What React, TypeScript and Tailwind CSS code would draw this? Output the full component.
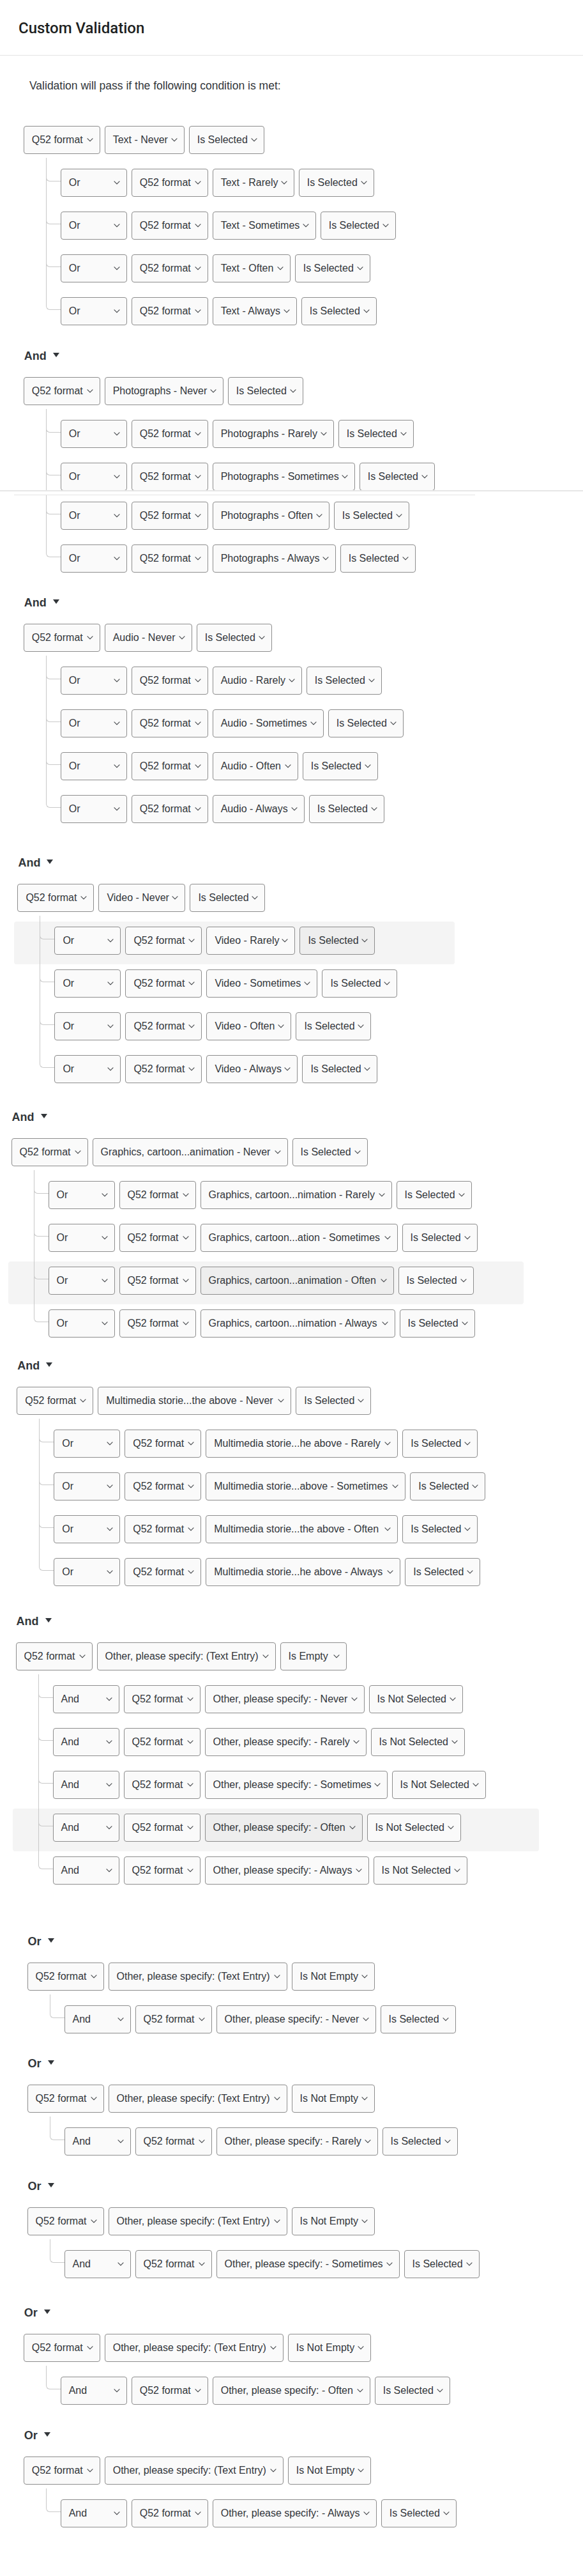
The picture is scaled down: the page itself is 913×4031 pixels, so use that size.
type Sel = { t: string; w: string };
type Child = { conj: string; v: Sel; op: Sel; band?: string; hot?: number };
type Sec = {
  x: string;
  mt: string;
  label?: string;
  top?: Sel[];
  stub: string;
  children: Child[];
  cutLast?: boolean;
};

const Q: Sel = { t: "Q52 format", w: "w-[120px]" };
const IS: Sel = { t: "Is Selected", w: "w-[118px]" };
const INS: Sel = { t: "Is Not Selected", w: "w-[147px]" };
const INE: Sel = { t: "Is Not Empty", w: "w-[130px]" };
const OTE: Sel = { t: "Other, please specify: (Text Entry)", w: "w-[280px]" };

const orc = (t: string, w: string, band?: string, hot?: number): Child => ({ conj: "Or", v: { t, w }, op: IS, band, hot });
const andc = (t: string, w: string, op: Sel, band?: string, hot?: number): Child => ({ conj: "And", v: { t, w }, op, band, hot });

const sections: Sec[] = [
  {
    x: "ml-[36.7px]",
    mt: "mt-[51px]",
    top: [Q, { t: "Text - Never", w: "w-[125px]" }, IS],
    stub: "mt-[6px] h-[9px]",
    children: [
      orc("Text - Rarely", "w-[128px]"),
      orc("Text - Sometimes", "w-[162px]"),
      orc("Text - Often", "w-[122px]"),
      orc("Text - Always", "w-[132px]"),
    ],
  },
  {
    x: "ml-[36.7px]",
    mt: "mt-[21px]",
    label: "And",
    top: [Q, { t: "Photographs - Never", w: "w-[186px]" }, IS],
    stub: "mt-[6px] h-[9px]",
    children: [orc("Photographs - Rarely", "w-[190px]"), orc("Photographs - Sometimes", "w-[223px]")],
    cutLast: true,
  },
];

const sectionsB: Sec[] = [
  {
    x: "ml-[36.7px]",
    mt: "mt-0",
    stub: "mt-0 h-[2.3px]",
    children: [orc("Photographs - Often", "w-[183px]"), orc("Photographs - Always", "w-[193px]")],
  },
  {
    x: "ml-[36.7px]",
    mt: "mt-[20px]",
    label: "And",
    top: [Q, { t: "Audio - Never", w: "w-[137px]" }, IS],
    stub: "mt-[6px] h-[9px]",
    children: [
      orc("Audio - Rarely", "w-[140px]"),
      orc("Audio - Sometimes", "w-[174px]"),
      orc("Audio - Often", "w-[134px]"),
      orc("Audio - Always", "w-[144px]"),
    ],
  },
  {
    x: "ml-[27.4px]",
    mt: "mt-[35px]",
    label: "And",
    top: [Q, { t: "Video - Never", w: "w-[136px]" }, IS],
    stub: "mt-[6px] h-[9px]",
    children: [
      orc("Video - Rarely", "w-[139px]", "w-[690px]", 3),
      orc("Video - Sometimes", "w-[174px]"),
      orc("Video - Often", "w-[133px]"),
      orc("Video - Always", "w-[143px]"),
    ],
  },
  {
    x: "ml-[17.5px]",
    mt: "mt-[26px]",
    label: "And",
    top: [Q, { t: "Graphics, cartoon...animation - Never", w: "w-[306px]" }, IS],
    stub: "mt-[6px] h-[9px]",
    children: [
      orc("Graphics, cartoon...nimation - Rarely", "w-[300px]"),
      orc("Graphics, cartoon...ation - Sometimes", "w-[309px]"),
      orc("Graphics, cartoon...animation - Often", "w-[303px]", "w-[807px]", 2),
      orc("Graphics, cartoon...nimation - Always", "w-[305px]"),
    ],
  },
  {
    x: "ml-[26.2px]",
    mt: "mt-[17px]",
    label: "And",
    top: [Q, { t: "Multimedia storie...the above - Never", w: "w-[303px]" }, IS],
    stub: "mt-[6px] h-[9px]",
    children: [
      orc("Multimedia storie...he above - Rarely", "w-[301px]"),
      orc("Multimedia storie...above - Sometimes", "w-[313px]"),
      orc("Multimedia storie...the above - Often", "w-[301px]"),
      orc("Multimedia storie...he above - Always", "w-[305px]"),
    ],
  },
  {
    x: "ml-[24.5px]",
    mt: "mt-[28px]",
    label: "And",
    top: [Q, OTE, { t: "Is Empty", w: "w-[104px]" }],
    stub: "mt-[6px] h-[9px]",
    children: [
      andc("Other, please specify: - Never", "w-[250px]", INS),
      andc("Other, please specify: - Rarely", "w-[253px]", INS),
      andc("Other, please specify: - Sometimes", "w-[286px]", INS),
      andc("Other, please specify: - Often", "w-[247px]", INS, "w-[824px]", 2),
      andc("Other, please specify: - Always", "w-[257px]", INS),
    ],
  },
  {
    x: "ml-[42.5px]",
    mt: "mt-[62px]",
    label: "Or",
    top: [Q, OTE, INE],
    stub: "mt-[6px] h-[9px]",
    children: [andc("Other, please specify: - Never", "w-[250px]", IS)],
  },
  {
    x: "ml-[42.5px]",
    mt: "mt-[20px]",
    label: "Or",
    top: [Q, OTE, INE],
    stub: "mt-[6px] h-[9px]",
    children: [andc("Other, please specify: - Rarely", "w-[253px]", IS)],
  },
  {
    x: "ml-[42.5px]",
    mt: "mt-[21px]",
    label: "Or",
    top: [Q, OTE, INE],
    stub: "mt-[6px] h-[9px]",
    children: [andc("Other, please specify: - Sometimes", "w-[287px]", IS)],
  },
  {
    x: "ml-[36.7px]",
    mt: "mt-[27px]",
    label: "Or",
    top: [Q, OTE, INE],
    stub: "mt-[6px] h-[9px]",
    children: [andc("Other, please specify: - Often", "w-[247px]", IS)],
  },
  {
    x: "ml-[36.7px]",
    mt: "mt-[21px]",
    label: "Or",
    top: [Q, OTE, INE],
    stub: "mt-[6px] h-[9px]",
    children: [andc("Other, please specify: - Always", "w-[257px]", IS)],
  },
];

function Chevron() {
  return (
    <svg width="10" height="6" viewBox="0 0 10 6" className="shrink-0" fill="none">
      <polyline points="1,0.8 5,4.8 9,0.8" stroke="#4a4d50" strokeWidth="1.2" strokeLinecap="round" strokeLinejoin="round" />
    </svg>
  );
}

function Box({ s, hot }: { s: Sel; hot?: boolean }) {
  return (
    <div
      className={`flex h-[44px] shrink-0 items-center justify-between rounded-[4px] border border-[#8d8d8d] pl-[12px] pr-[10px] text-[16px] text-[#32363a] ${
        hot ? "bg-[#eeeeee]" : "bg-[#fafafa]"
      } ${s.w}`}
    >
      <span className="whitespace-nowrap">{s.t}</span>
      <Chevron />
    </div>
  );
}

function Label({ text }: { text: string }) {
  return (
    <div className="ml-[1px] flex h-[24px] items-center gap-[10px] text-[18px] font-bold leading-[24px] text-[#32363a]">
      <span>{text}</span>
      <svg width="10" height="7" viewBox="0 0 10 7" className="mb-[3px]">
        <polygon points="0,0 10,0 5,7" fill="#32363a" />
      </svg>
    </div>
  );
}

function ChildRow({ c, last, cut }: { c: Child; last: boolean; cut: boolean }) {
  return (
    <div className={`-ml-[5px] flex rounded-[4px] pl-[40px] ${c.band ? "bg-[#f4f4f4] " + c.band : ""}`}>
      <div className={`w-[23px] shrink-0 ${last ? "" : "border-l border-[#c9c9c9]"}`}>
        <div className={`h-[28px] rounded-bl-[6px] border-b border-l border-[#c9c9c9] ${last ? "" : "-ml-px"}`} />
      </div>
      <div className={`flex gap-[7px] pt-[8px] ${cut ? "h-[51px] overflow-hidden" : "pb-[15px]"}`}>
        <Box s={{ t: c.conj, w: "w-[104px]" }} hot={c.hot === 0} />
        <Box s={Q} hot={c.hot === 1} />
        <Box s={c.v} hot={c.hot === 2} />
        <Box s={c.op} hot={c.hot === 3} />
      </div>
    </div>
  );
}

function Section({ s }: { s: Sec }) {
  return (
    <div className={`${s.x} ${s.mt}`}>
      {s.label && <Label text={s.label} />}
      {s.top && (
        <div className={`flex gap-[7px] ${s.label ? "mt-[21px]" : ""}`}>
          {s.top.map((b, i) => (
            <Box key={i} s={b} />
          ))}
        </div>
      )}
      <div className={`ml-[35px] w-px bg-[#c9c9c9] ${s.stub}`} />
      {s.children.map((c, i) => {
        const isLast = i === s.children.length - 1;
        return <ChildRow key={i} c={c} last={isLast && !s.cutLast} cut={isLast && !!s.cutLast} />;
      })}
    </div>
  );
}

export default function App() {
  return (
    <div className="min-h-[4031px] bg-white font-['Liberation_Sans',Arial,sans-serif] text-[#32363a]">
      <div className="border-b border-[#e3e3e3] pl-[29px] pt-[28px] pb-[26px]">
        <h1 className="font-['Roboto',sans-serif] text-[24px] leading-[32px] font-medium text-[#1d1f21]">Custom Validation</h1>
      </div>
      <p className="ml-[46px] mt-[35px] text-[17.5px] leading-[24px]">Validation will pass if the following condition is met:</p>
      {sections.map((s, i) => (
        <Section key={i} s={s} />
      ))}
      <div className="h-[2px] bg-[#e6e6e6]" />
      <div className="ml-[22px] mt-[4.7px] h-px w-[722px] bg-[#e4e4e4]" />
      {sectionsB.map((s, i) => (
        <Section key={i} s={s} />
      ))}
    </div>
  );
}
